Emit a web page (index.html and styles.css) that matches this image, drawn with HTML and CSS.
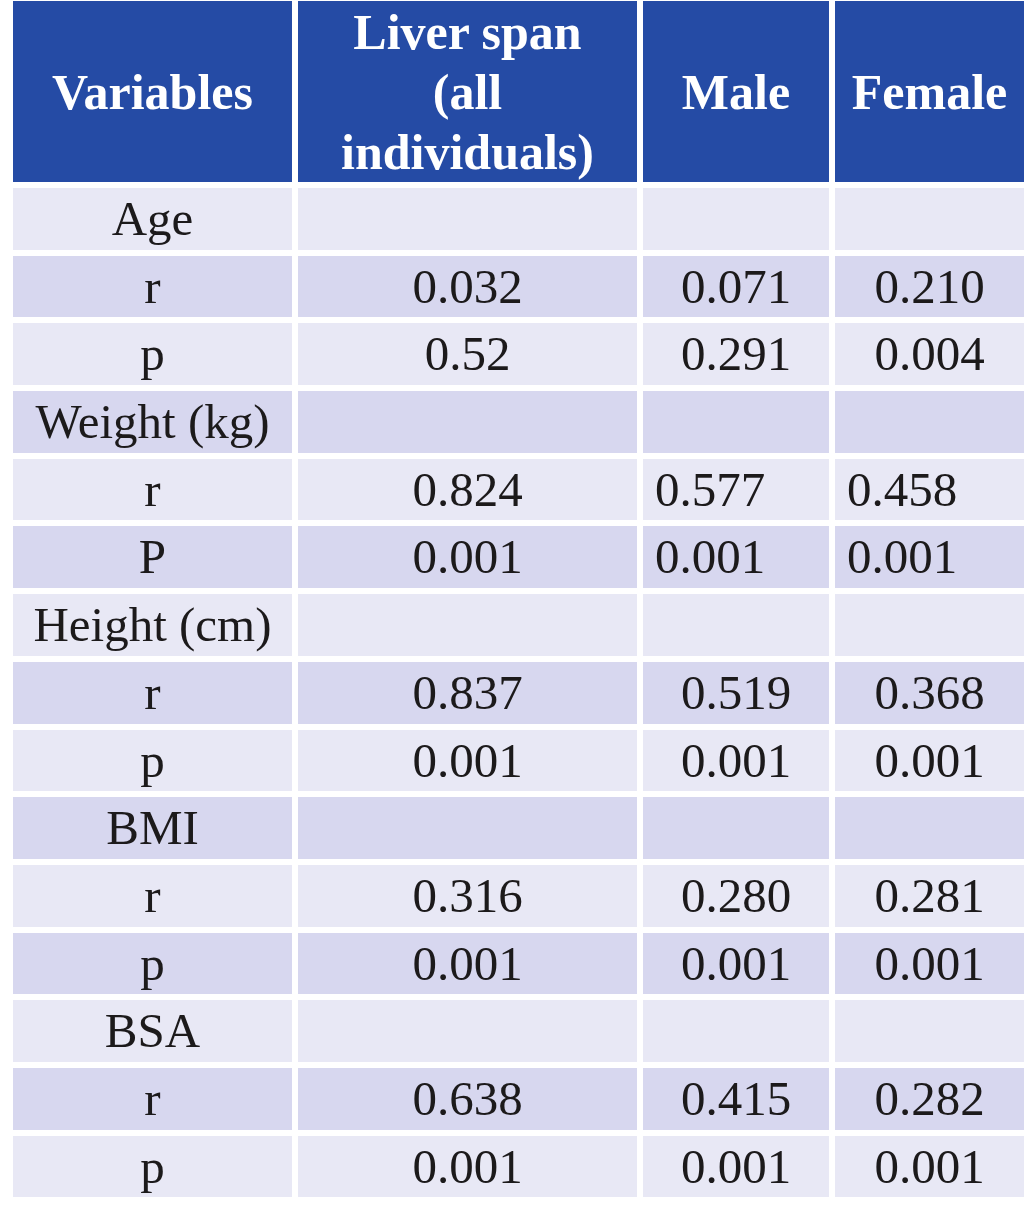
FILE: index.html
```html
<!DOCTYPE html>
<html lang="en">
<head>
<meta charset="utf-8">
<title>Liver span correlations</title>
<link rel="stylesheet" href="styles.css">
</head>
<body>
<div class="table">
  <div class="cell head">Variables</div>
  <div class="cell head multi">Liver span<br>(all<br>individuals)</div>
  <div class="cell head">Male</div>
  <div class="cell head">Female</div>

  <div class="cell light">Age</div><div class="cell light"></div><div class="cell light"></div><div class="cell light"></div>
  <div class="cell dark">r</div><div class="cell dark">0.032</div><div class="cell dark">0.071</div><div class="cell dark">0.210</div>
  <div class="cell light">p</div><div class="cell light">0.52</div><div class="cell light">0.291</div><div class="cell light">0.004</div>

  <div class="cell dark">Weight (kg)</div><div class="cell dark"></div><div class="cell dark"></div><div class="cell dark"></div>
  <div class="cell light">r</div><div class="cell light">0.824</div><div class="cell light left">0.577</div><div class="cell light left">0.458</div>
  <div class="cell dark">P</div><div class="cell dark">0.001</div><div class="cell dark left">0.001</div><div class="cell dark left">0.001</div>

  <div class="cell light">Height (cm)</div><div class="cell light"></div><div class="cell light"></div><div class="cell light"></div>
  <div class="cell dark">r</div><div class="cell dark">0.837</div><div class="cell dark">0.519</div><div class="cell dark">0.368</div>
  <div class="cell light">p</div><div class="cell light">0.001</div><div class="cell light">0.001</div><div class="cell light">0.001</div>

  <div class="cell dark">BMI</div><div class="cell dark"></div><div class="cell dark"></div><div class="cell dark"></div>
  <div class="cell light">r</div><div class="cell light">0.316</div><div class="cell light">0.280</div><div class="cell light">0.281</div>
  <div class="cell dark">p</div><div class="cell dark">0.001</div><div class="cell dark">0.001</div><div class="cell dark">0.001</div>

  <div class="cell light">BSA</div><div class="cell light"></div><div class="cell light"></div><div class="cell light"></div>
  <div class="cell dark">r</div><div class="cell dark">0.638</div><div class="cell dark">0.415</div><div class="cell dark">0.282</div>
  <div class="cell light">p</div><div class="cell light">0.001</div><div class="cell light">0.001</div><div class="cell light">0.001</div>
</div>
</body>
</html>
```

FILE: styles.css
```css
html, body {
  margin: 0;
  padding: 0;
  background: #ffffff;
}

body {
  padding: 1px 9px 0 13px;
  font-family: "Liberation Serif", "Times New Roman", serif;
  color: #1c1a1b;
}

.table {
  display: grid;
  grid-template-columns: 279px 339px 186px 189px;
  grid-template-rows: 181px repeat(15, 61.7px);
  column-gap: 6px;
  row-gap: 6px;
  width: 1011px;
}

.cell {
  display: flex;
  align-items: center;
  justify-content: center;
  text-align: center;
  font-size: 49px;
  line-height: 61.7px;
  white-space: nowrap;
}

.head {
  background: #254ba5;
  color: #ffffff;
  font-weight: bold;
  font-size: 50px;
  line-height: 60px;
}

.light {
  background: #e8e8f5;
}

.dark {
  background: #d7d7ef;
}

.left {
  justify-content: flex-start;
  padding-left: 12px;
}
```
